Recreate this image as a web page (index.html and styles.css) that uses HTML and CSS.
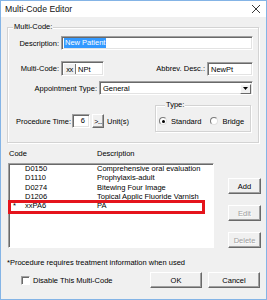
FILE: index.html
```html
<!DOCTYPE html>
<html>
<head>
<meta charset="utf-8">
<link rel="stylesheet" href="styles.css">
</head>
<body>
<div class="window">
  <div class="titlebar">
    <span class="title">Multi-Code Editor</span>
    <svg class="close" width="10" height="10" viewBox="0 0 10 10"><path d="M1 1L9 9M9 1L1 9" stroke="#222" stroke-width="0.9" fill="none"/></svg>
  </div>
  <div class="content">
    <div class="group main">
      <span class="legend">Multi-Code:</span>
      <div class="row r1">
        <span class="lbl w53">Description:</span>
        <div class="field desc"><span class="sel">New Patient</span></div>
      </div>
      <div class="row r2">
        <span class="lbl w53">Multi-Code:</span>
        <div class="field mcbox"><span class="xx">xx</span><span class="npt">NPt</span></div>
        <span class="lbl grow">Abbrev. Desc.:</span>
        <div class="field abbr">NewPt</div>
      </div>
      <div class="row r3">
        <span class="lbl w91">Appointment Type:</span>
        <div class="field select"><span class="selval">General</span><span class="ddbtn"><svg width="5" height="3" viewBox="0 0 5 3"><path d="M0 0H5L2.5 3Z" fill="#000"/></svg></span></div>
      </div>
      <div class="row r4">
        <div class="proc">
          <span class="lbl w64">Procedure Time:</span>
          <div class="field units">6</div>
          <div class="btn tiny">&gt;...</div>
          <span class="unit">Unit(s)</span>
        </div>
        <div class="group type">
          <span class="legend">Type:</span>
          <span class="radio"><span class="rb on"></span>Standard</span>
          <span class="radio r-br"><span class="rb"></span>Bridge</span>
        </div>
      </div>
    </div>

    <div class="listhead"><span class="hc">Code</span><span class="hd">Description</span></div>
    <div class="listarea">
      <div class="list">
        <div class="item"><span class="c0"></span><span class="c1">D0150</span><span class="c2">Comprehensive oral evaluation</span></div>
        <div class="item"><span class="c0"></span><span class="c1">D1110</span><span class="c2">Prophylaxis-adult</span></div>
        <div class="item"><span class="c0"></span><span class="c1">D0274</span><span class="c2">Bitewing Four Image</span></div>
        <div class="item"><span class="c0"></span><span class="c1">D1206</span><span class="c2">Topical Applic Fluoride Varnish</span></div>
        <div class="item"><span class="c0">*</span><span class="c1">xxPA6</span><span class="c2">PA</span></div>
        <div class="mark"></div>
      </div>
      <div class="sidebtns">
        <div class="btn side">Add</div>
        <div class="btn side disabled">Edit</div>
        <div class="btn side disabled">Delete</div>
      </div>
    </div>

    <div class="note">*Procedure requires treatment information when used</div>
    <div class="bottom">
      <span class="check"><span class="cb"></span>Disable This Multi-Code</span>
      <div class="dlgbtns">
        <div class="btn dlg">OK</div>
        <div class="btn dlg">Cancel</div>
      </div>
    </div>
  </div>
</div>
</body>
</html>
```

FILE: styles.css
```css
html, body {
  margin: 0;
  padding: 0;
  background: #ffffff;
}
body {
  font-family: "Liberation Sans", Arial, sans-serif;
  font-size: 7.5px;
  color: #000;
}
.window {
  width: 267px;
  height: 300px;
  box-sizing: border-box;
  border: 1px solid #84b4e6;
  display: flex;
  flex-direction: column;
  overflow: hidden;
}
.titlebar {
  height: 16px;
  flex: none;
  background: #ffffff;
  display: flex;
  align-items: center;
  padding-left: 4px;
  padding-right: 5px;
  padding-bottom: 1px;
  box-sizing: border-box;
}
.title {
  font-size: 8.7px;
  color: #111;
  flex: 1;
}
.close {
  display: block;
}
.content {
  flex: 1;
  background: #f0f0f0;
  padding: 0 5px 0 6px;
}
.group {
  position: relative;
  box-sizing: border-box;
  border: 1px solid #d3d3d3;
  box-shadow: inset 1px 1px 0 #fff, 1px 1px 0 #fff;
}
.legend {
  position: absolute;
  top: -6px;
  left: 5px;
  line-height: 10px;
  padding: 0 1px;
  background: #f0f0f0;
}
.main {
  margin-top: 10px;
  width: 252px;
  height: 116px;
}
.row {
  display: flex;
  align-items: center;
  width: 245px;
}
.lbl {
  box-sizing: border-box;
  text-align: right;
  padding-right: 2px;
  white-space: nowrap;
  flex: none;
}
.w53 { width: 53px; }
.w91 { width: 91px; }
.w64 { width: 64px; padding-right: 1px; }
.grow { flex: 1; }

.field {
  box-sizing: border-box;
  border: 1px solid;
  border-color: #a0a0a0 #ffffff #ffffff #a0a0a0;
  box-shadow: inset 1px 1px 0 #696969, inset -1px -1px 0 #e3e3e3;
  background: #fff;
  white-space: nowrap;
}
.r1 { margin-top: 8px; height: 14px; }
.desc {
  width: 192px;
  height: 14px;
  padding: 1px 0 0 2px;
  line-height: 10px;
}
.sel {
  display: inline-block;
  background: #3399ff;
  color: #fff;
  padding: 0 1px;
}
.r2 { margin-top: 11px; height: 15px; }
.mcbox {
  width: 43px;
  height: 15px;
  display: flex;
  padding: 2px 1px 1px 2px;
  line-height: 11px;
}
.xx {
  width: 11px;
  text-align: center;
  background: #f0f0f0;
  border-right: 1px solid #7a7a7a;
  letter-spacing: -0.5px;
}
.npt {
  flex: 1;
  padding-left: 2px;
}
.abbr {
  width: 46px;
  height: 14px;
  padding: 1px 0 0 3px;
  line-height: 11px;
}
.r3 { margin-top: 5px; height: 14px; }
.select {
  width: 154px;
  height: 14px;
  display: flex;
  align-items: center;
  padding: 2px 1px 1px 3px;
}
.selval { flex: 1; }
.ddbtn {
  width: 11px;
  height: 10px;
  box-sizing: border-box;
  background: #f0f0f0;
  border: 1px solid;
  border-color: #fff #696969 #696969 #fff;
  display: flex;
  align-items: center;
  justify-content: center;
}
.ddbtn svg { display: block; }

.r4 {
  margin-top: 10px;
  align-items: flex-start;
}
.proc {
  display: flex;
  align-items: center;
  margin-top: 9px;
}
.units {
  width: 18px;
  height: 14px;
  text-align: right;
  padding-right: 4px;
  line-height: 12px;
}
.btn {
  box-sizing: border-box;
  background: #f0f0f0;
  border: 1px solid;
  border-color: #fff #696969 #696969 #fff;
  box-shadow: inset -1px -1px 0 #a0a0a0;
  display: flex;
  align-items: center;
  justify-content: center;
  white-space: nowrap;
}
.tiny {
  width: 12px;
  height: 14px;
  margin-left: 2px;
  font-size: 7px;
  letter-spacing: -0.6px;
}
.unit { margin-left: 3px; }
.type {
  margin-left: auto;
  margin-right: 2px;
  width: 96px;
  height: 27px;
  display: flex;
  align-items: center;
  padding: 5px 0 0 3px;
}
.type .legend { left: 9px; }
.radio {
  display: flex;
  align-items: center;
}
.r-br { margin-left: 9px; }
.rb {
  width: 8px;
  height: 8px;
  box-sizing: border-box;
  border-radius: 50%;
  border: 1px solid;
  border-color: #7a7a7a #e0e0e0 #e0e0e0 #7a7a7a;
  background: #fff;
  margin-right: 4px;
  display: flex;
  align-items: center;
  justify-content: center;
}
.rb.on::after {
  content: "";
  width: 3px;
  height: 3px;
  border-radius: 50%;
  background: #000;
}

.listhead {
  display: flex;
  margin-top: 6px;
  height: 14px;
  line-height: 10px;
}
.hc { width: 88px; padding-left: 2px; }
.listarea {
  display: flex;
  height: 85px;
}
.list {
  position: relative;
  margin-left: 1px;
  width: 206px;
  height: 85px;
  box-sizing: border-box;
  border: 1px solid;
  border-color: #a0a0a0 #ffffff #ffffff #a0a0a0;
  box-shadow: inset 1px 1px 0 #696969;
  background: #fff;
}
.item {
  display: flex;
  height: 9.3px;
  line-height: 9.3px;
  white-space: nowrap;
}
.c0 { width: 12px; padding-left: 4px; }
.c1 { width: 72px; }
.mark {
  position: absolute;
  left: -1px;
  top: 36px;
  width: 197px;
  height: 14px;
  box-sizing: border-box;
  border: 3px solid #e5141c;
}
.sidebtns {
  margin-left: auto;
  display: flex;
  flex-direction: column;
}
.side {
  width: 33px;
  height: 16px;
  margin-top: 11px;
}
.side:first-child { margin-top: 15px; }
.disabled {
  color: #a0a0a0;
  text-shadow: 1px 1px 0 #fff;
}
.note {
  margin-top: 10px;
  line-height: 10px;
  white-space: nowrap;
}
.bottom {
  margin-top: 4px;
  height: 16px;
  display: flex;
  align-items: center;
}
.check {
  display: flex;
  align-items: center;
  margin-left: 14px;
}
.cb {
  width: 9px;
  height: 9px;
  box-sizing: border-box;
  border: 1px solid;
  border-color: #a0a0a0 #fff #fff #a0a0a0;
  box-shadow: inset 1px 1px 0 #696969;
  background: #fff;
  margin-right: 3px;
}
.dlgbtns {
  margin-left: auto;
  margin-right: 1px;
  display: flex;
  gap: 6px;
}
.dlg {
  width: 52px;
  height: 16px;
}
```
